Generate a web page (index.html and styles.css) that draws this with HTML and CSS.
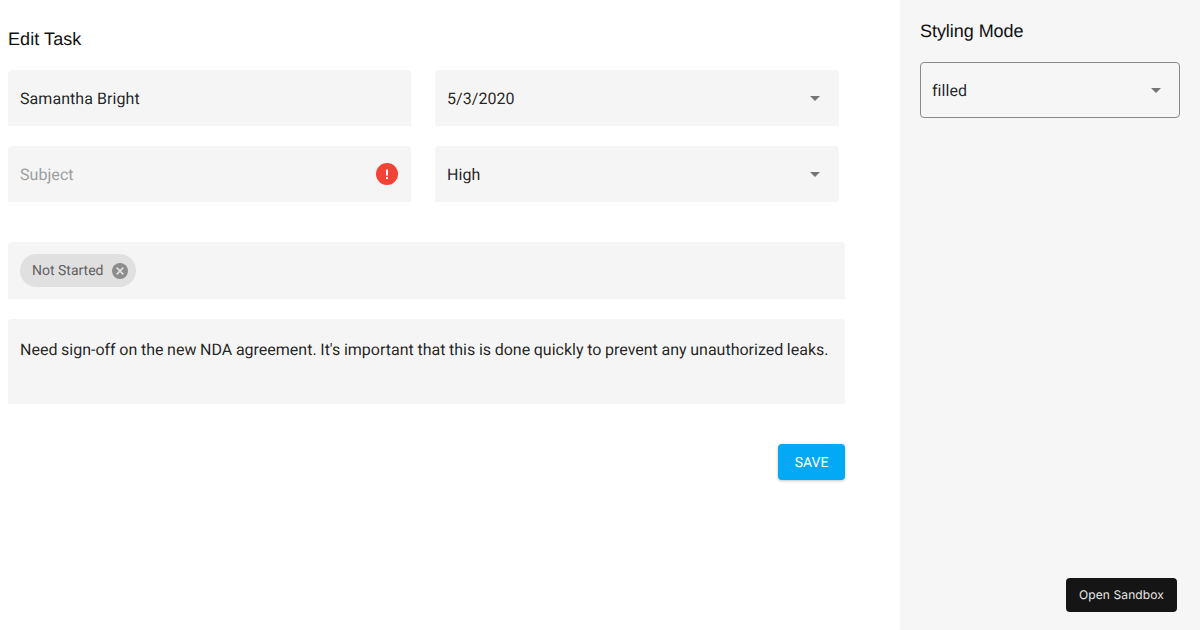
FILE: index.html
```html
<!DOCTYPE html>
<html lang="en">
<head>
    <meta charset="UTF-8">
    <meta name="viewport" content="width=device-width, initial-scale=1.0">
    <title>Edit Task</title>
    <link rel="stylesheet" href="styles.css">
</head>
<body>
    <div class="layout">
        <main class="form-area">
            <h1 class="form-title">Edit Task</h1>

            <div class="field-grid">
                <div class="field"><span class="field-text">Samantha Bright</span></div>
                <div class="field">
                    <span class="field-text">5/3/2020</span>
                    <span class="caret"></span>
                </div>
                <div class="field">
                    <span class="field-text placeholder">Subject</span>
                    <svg class="error-icon" width="22" height="22" viewBox="0 0 22 22">
                        <circle cx="11" cy="11" r="11" fill="#f44336"/>
                        <rect x="10" y="6.5" width="2" height="6" fill="#fff"/>
                        <rect x="10" y="14" width="2" height="2" fill="#fff"/>
                    </svg>
                </div>
                <div class="field">
                    <span class="field-text">High</span>
                    <span class="caret"></span>
                </div>
            </div>

            <div class="tag-field">
                <div class="tag">
                    <span class="tag-text">Not Started</span>
                    <svg class="tag-remove" width="16" height="16" viewBox="0 0 17 17">
                        <circle cx="8.5" cy="8.5" r="8.5" fill="#8c8c8c"/>
                        <path d="M5 5l7 7M12 5l-7 7" stroke="#e0e0e0" stroke-width="1.8" fill="none"/>
                    </svg>
                </div>
            </div>

            <div class="notes">Need sign-off on the new NDA agreement. It's important that this is done quickly to prevent any unauthorized leaks.</div>

            <div class="actions">
                <button class="save-button" type="button">SAVE</button>
            </div>
        </main>

        <aside class="options">
            <div class="options-title">Styling Mode</div>
            <div class="mode-select">
                <span class="field-text">filled</span>
                <span class="caret"></span>
            </div>
        </aside>
    </div>

    <button class="sandbox-button" type="button">Open Sandbox</button>
</body>
</html>
```

FILE: styles.css
```css
html, body {
    margin: 0;
    height: 100%;
}
body {
    font-family: Roboto, sans-serif;
    font-size: 16px;
    color: rgba(0,0,0,0.87);
    background-color: #fff;
    overflow: hidden;
    text-rendering: geometricPrecision;
}
.layout {
    display: flex;
    height: 630px;
}
.form-area {
    flex: 1;
    min-width: 0;
    padding: 0 55px 0 8px;
}
.form-title {
    margin: 0;
    height: 70px;
    line-height: 78px;
    font-family: "Liberation Sans", Arial, sans-serif;
    font-size: 18px;
    font-weight: normal;
    letter-spacing: 0.08px;
    color: #111;
}
.field-grid {
    display: grid;
    grid-template-columns: 403px 404px;
    column-gap: 24px;
    row-gap: 20px;
}
.field {
    display: flex;
    align-items: center;
    justify-content: space-between;
    height: 56px;
    padding: 0 13px 0 12px;
    box-sizing: border-box;
    background-color: #f5f5f5;
    border-radius: 4px 4px 0 0;
}
.field-text {
    line-height: 20px;
    padding-top: 2px;
    letter-spacing: 0.06px;
}
.placeholder {
    color: #9e9e9e;
}
.caret {
    width: 0;
    height: 0;
    margin-right: 6px;
    border-left: 5px solid transparent;
    border-right: 5px solid transparent;
    border-top: 5px solid #757575;
}
.tag-field {
    display: flex;
    align-items: flex-start;
    height: 57px;
    margin-top: 40px;
    padding: 12px;
    box-sizing: border-box;
    background-color: #f5f5f5;
    border-radius: 4px 4px 0 0;
}
.tag {
    display: flex;
    align-items: center;
    gap: 8px;
    height: 33px;
    padding: 0 8px 0 12px;
    background-color: #e0e0e0;
    border-radius: 17px;
    font-size: 14px;
    color: #616161;
}
.tag-remove {
    margin-top: 1px;
}
.notes {
    height: 85px;
    margin-top: 20px;
    padding: 21px 12px 0;
    box-sizing: border-box;
    background-color: #f5f5f5;
    border-radius: 4px 4px 0 0;
    line-height: 20px;
    word-spacing: -0.33px;
}
.actions {
    display: flex;
    justify-content: flex-end;
    margin-top: 40px;
}
.save-button {
    width: 67px;
    height: 36px;
    padding: 1px 0 0;
    border: none;
    border-radius: 4px;
    background-color: #03a9f4;
    box-shadow: 0 1px 3px rgba(0,0,0,0.24);
    color: #fff;
    font-family: Roboto, sans-serif;
    font-size: 14px;
    text-rendering: geometricPrecision;
}
.options {
    width: 300px;
    padding: 0 20px;
    box-sizing: border-box;
    background-color: #f6f6f6;
}
.options-title {
    height: 62px;
    line-height: 62px;
    font-family: "Liberation Sans", Arial, sans-serif;
    font-size: 18px;
    letter-spacing: -0.05px;
    color: #111;
}
.mode-select {
    display: flex;
    align-items: center;
    justify-content: space-between;
    height: 56px;
    padding: 0 12px 0 11px;
    box-sizing: border-box;
    border: 1px solid #8a8a8a;
    border-radius: 4px;
}
.sandbox-button {
    position: fixed;
    right: 23px;
    bottom: 18px;
    width: 111px;
    height: 34px;
    padding: 0 0 1px;
    border: none;
    border-radius: 4px;
    background-color: #151515;
    color: #e8e8e8;
    font-family: Inter, sans-serif;
    font-size: 12px;
    letter-spacing: 0.1px;
    text-rendering: geometricPrecision;
}
```
